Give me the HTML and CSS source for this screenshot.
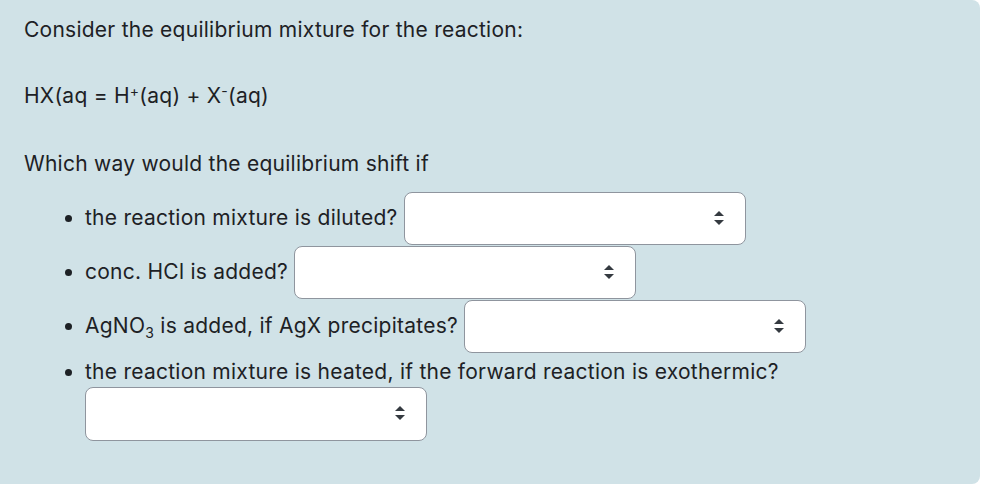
FILE: index.html
```html
<!DOCTYPE html>
<html>
<head>
<meta charset="utf-8">
<link rel="stylesheet" href="styles.css">
</head>
<body>
<div class="formulation">
  <p class="line">Consider the equilibrium mixture for the reaction:</p>
  <p class="line eq">HX(aq = H<sup>+</sup>(aq) + X<sup>-</sup>(aq)</p>
  <p class="line ask">Which way would the equilibrium shift if</p>
  <ul class="items">
    <li>the reaction mixture is diluted? <span class="sel"><span class="arrows"></span></span></li>
    <li>conc. HCl is added? <span class="sel"><span class="arrows"></span></span></li>
    <li>AgNO<sub>3</sub> is added, if AgX precipitates? <span class="sel"><span class="arrows"></span></span></li>
    <li class="last">the reaction mixture is heated, if the forward reaction is exothermic? <span class="sel"><span class="arrows"></span></span></li>
  </ul>
</div>
</body>
</html>
```
FILE: styles.css
```css
html, body {
  margin: 0;
  padding: 0;
  background: #ffffff;
}
.formulation {
  width: 980px;
  height: 484px;
  box-sizing: border-box;
  background: #d0e2e7;
  border-radius: 0 8px 8px 0;
  padding: 15px 0 0 24px;
  font-family: Inter, "Noto Sans", sans-serif;
  font-size: 21px;
  letter-spacing: 0.25px;
  line-height: 30px;
  color: #1d2125;
}
.line {
  margin: 0 0 36px 0;
}
.line.eq {
  margin-bottom: 38px;
}
.line.ask {
  margin-bottom: 13px;
}
sup {
  font-size: 14px;
  line-height: 0;
  vertical-align: 7px;
}
sub {
  font-size: 14px;
  line-height: 0;
  vertical-align: -5px;
}
.items {
  margin: 0;
  padding: 0 0 0 61px;
  list-style: disc;
}
.items li {
  line-height: 30px;
}
.items li.last {
  padding-top: 3px;
}
.sel {
  display: inline-block;
  position: relative;
  box-sizing: border-box;
  width: 342px;
  height: 53px;
  margin: 0 0 1px 0;
  border: 1px solid #8f959e;
  border-radius: 8px;
  background: #ffffff;
  vertical-align: middle;
}
.items li.last .sel {
  height: 54px;
}
.arrows {
  position: absolute;
  right: 21px;
  top: 18px;
  width: 10px;
  height: 14px;
}
.arrows::before, .arrows::after {
  content: "";
  position: absolute;
  left: 0;
  width: 0;
  height: 0;
  border-left: 5px solid transparent;
  border-right: 5px solid transparent;
}
.arrows::before {
  top: 0;
  border-bottom: 5px solid #343a40;
}
.arrows::after {
  bottom: 0;
  border-top: 5px solid #343a40;
}
```
